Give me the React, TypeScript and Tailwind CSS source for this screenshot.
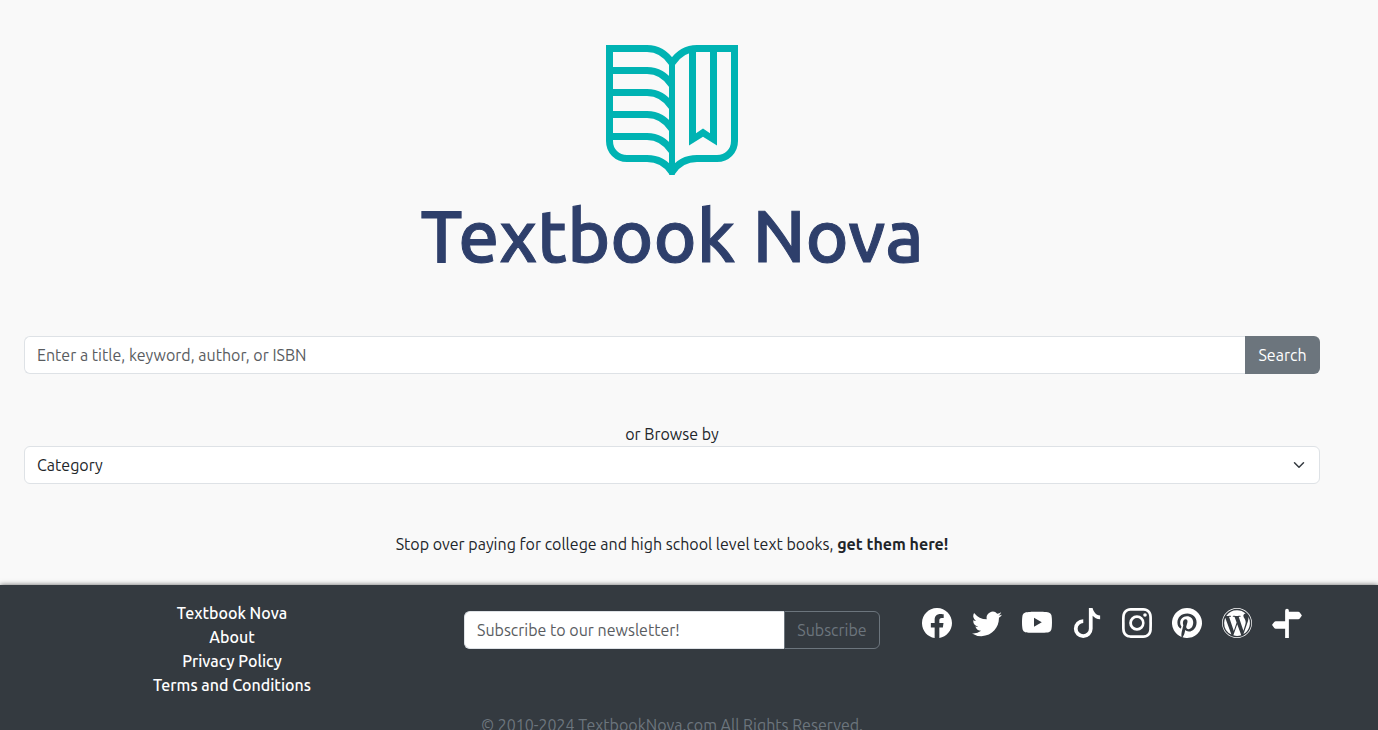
import type { IconType } from "react-icons";
import {
  BsFacebook,
  BsInstagram,
  BsPinterest,
  BsSignpostSplitFill,
  BsTiktok,
  BsTwitter,
  BsWordpress,
  BsYoutube,
} from "react-icons/bs";

const footerLinks = [
  { label: "Textbook Nova", href: "/" },
  { label: "About", href: "/about" },
  { label: "Privacy Policy", href: "/privacy" },
  { label: "Terms and Conditions", href: "/terms" },
];

const socials: { name: string; Icon: IconType }[] = [
  { name: "Facebook", Icon: BsFacebook },
  { name: "Twitter", Icon: BsTwitter },
  { name: "YouTube", Icon: BsYoutube },
  { name: "TikTok", Icon: BsTiktok },
  { name: "Instagram", Icon: BsInstagram },
  { name: "Pinterest", Icon: BsPinterest },
  { name: "WordPress", Icon: BsWordpress },
  { name: "Directory", Icon: BsSignpostSplitFill },
];

function BookLogo() {
  return (
    <svg
      viewBox="0 0 132 130"
      className="w-[132px] h-[130px]"
      fill="none"
      stroke="#00b3b3"
      strokeWidth="7"
      aria-hidden="true"
    >
      <path d="M66 18C60 9 51 3.5 41 3.5H3.5V96C3.5 106 11 113.5 21 113.5H41C51 113.5 60 118 66 127C72 118 81 113.5 91 113.5H111C121 113.5 128.5 106 128.5 96V3.5H91C81 3.5 72 9 66 18Z" />
      <path d="M66 15V127" strokeWidth="6" />
      <path d="M4 25.5H41C51 25.5 60 31 66 40M4 47.5H41C51 47.5 60 53 66 62M4 69.5H41C51 69.5 60 75 66 84M4 91.5H41C51 91.5 60 97 66 106" />
      <path
        d="M83 4V100.5L97 91.8L111 100.5V4H104V88.3L97 83.5L90 88.3V4Z"
        fill="#00b3b3"
        stroke="none"
      />
      <path d="M62 122H70L68.5 130H63.5Z" fill="#00b3b3" stroke="none" />
    </svg>
  );
}

function Footer() {
  return (
    <footer className="bg-[#343a40] pt-4 pl-3 pr-[46px] shadow-[0_0_5px_rgba(0,0,0,0.6)]">
      <div className="grid grid-cols-3">
        <nav className="flex flex-col items-center px-3">
          {footerLinks.map((link) => (
            <a
              key={link.label}
              href={link.href}
              className="font-medium text-white"
            >
              {link.label}
            </a>
          ))}
        </nav>

        <form className="flex items-start px-3 pt-[10px]">
          <input
            type="email"
            aria-label="Newsletter email"
            placeholder="Subscribe to our newsletter!"
            className="h-[38px] min-w-0 flex-1 rounded-l-md border border-r-0 border-[#dee2e6] bg-white px-3 placeholder:text-[#595c5f]"
          />
          <button
            type="button"
            className="h-[38px] w-24 rounded-r-md border border-[#6c757d] text-center text-[#6c757d]"
          >
            Subscribe
          </button>
        </form>

        <div className="flex items-start justify-center gap-5 px-3 pt-[7px]">
          {socials.map(({ name, Icon }) => (
            <a key={name} href="#" aria-label={name} className="text-white">
              <Icon className="size-[30px]" />
            </a>
          ))}
        </div>
      </div>
      <p className="mt-4 pb-4 text-center text-[#6c757d]">
        © 2010-2024 TextbookNova.com All Rights Reserved.
      </p>
    </footer>
  );
}

export default function App() {
  return (
    <div className="min-h-screen bg-[#f9f9f9] font-['Ubuntu','Noto_Sans',sans-serif] text-base text-[#212529]">
      <main className="pt-[45px] pb-[29px] pl-6 pr-[58px]">
        <div className="flex flex-col items-center">
          <BookLogo />
          <h1 className="mt-4 h-[145px] text-[73px] leading-[88px] font-medium text-[#2e3f6b] [-webkit-text-stroke:1px_#2e3f6b]">
            Textbook Nova
          </h1>
        </div>

        <form className="flex">
          <input
            type="text"
            aria-label="Search books"
            placeholder="Enter a title, keyword, author, or ISBN"
            className="h-[38px] min-w-0 flex-1 rounded-l-md border border-r-0 border-[#dee2e6] bg-white px-3 placeholder:text-[#595c5f]"
          />
          <button
            type="button"
            className="h-[38px] w-[75px] rounded-r-md bg-[#6c757d] text-center text-white"
          >
            Search
          </button>
        </form>

        <div className="mt-12">
          <label htmlFor="category" className="block text-center">
            or Browse by
          </label>
          <div className="relative">
            <select
              id="category"
              className="block h-[38px] w-full appearance-none rounded-md border border-[#dee2e6] bg-white px-3"
            >
              <option>Category</option>
            </select>
            <svg
              viewBox="0 0 16 16"
              className="pointer-events-none absolute top-[13px] right-[15px] size-3"
              fill="none"
              stroke="#343a40"
              strokeWidth="2"
              strokeLinecap="round"
              strokeLinejoin="round"
              aria-hidden="true"
            >
              <path d="m2 5 6 6 6-6" />
            </svg>
          </div>
        </div>

        <p className="mt-12 text-center">
          Stop over paying for college and high school level text books,{" "}
          <a href="#" className="font-bold">
            get them here!
          </a>
        </p>
      </main>
      <Footer />
    </div>
  );
}
